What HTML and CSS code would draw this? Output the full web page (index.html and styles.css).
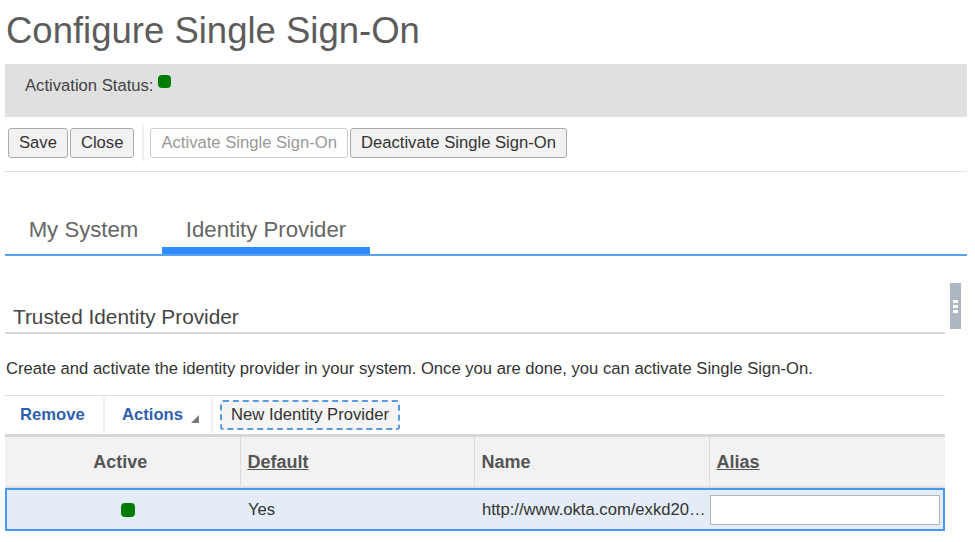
FILE: index.html
```html
<!DOCTYPE html>
<html lang="en">

<head>
    <meta charset="UTF-8">
    <title>Configure Single Sign-On</title>
    <link rel="stylesheet" href="styles.css">
</head>

<body>
    <h1 class="page-title">Configure Single Sign-On</h1>

    <div class="status-bar">
        <span>Activation Status:</span>
        <span class="status-dot status-dot-raised"></span>
    </div>

    <div class="page-toolbar">
        <button class="btn">Save</button>
        <button class="btn">Close</button>
        <span class="toolbar-sep"></span>
        <button class="btn btn-disabled">Activate Single Sign-On</button>
        <button class="btn">Deactivate Single Sign-On</button>
    </div>

    <div class="tabs">
        <div class="tab">My System</div>
        <div class="tab tab-active">Identity Provider</div>
    </div>

    <div class="content">
        <h2 class="section-title">Trusted Identity Provider</h2>
        <p class="section-text">Create and activate the identity provider in your system. Once you are done, you can activate Single Sign-On.</p>

        <div class="table-toolbar">
            <a class="tool-link tool-remove">Remove</a>
            <a class="tool-link tool-actions">Actions <span class="corner"></span></a>
            <button class="btn btn-focus">New Identity Provider</button>
        </div>

        <table class="idp-table">
            <colgroup>
                <col class="col-active">
                <col class="col-default">
                <col class="col-name">
                <col>
            </colgroup>
            <thead>
                <tr>
                    <th class="center">Active</th>
                    <th><u>Default</u></th>
                    <th>Name</th>
                    <th><u>Alias</u></th>
                </tr>
            </thead>
            <tbody>
                <tr>
                    <td class="center"><span class="status-dot status-dot-low"></span></td>
                    <td>Yes</td>
                    <td class="cut">http://www.okta.com/exkd20…</td>
                    <td class="input-cell"><input type="text" class="alias-input"></td>
                </tr>
            </tbody>
        </table>
    </div>

    <div class="grip"><i></i><i></i><i></i></div>
</body>

</html>
```

FILE: styles.css
```css
body {
    font-family: "Liberation Sans", Arial, sans-serif;
    margin: 0;
    padding: 0 8px 0 5px;
    background: #fff;
    color: #333;
    font-size: 16.64px;
}

.page-title {
    margin: 0 0 0 1px;
    padding-top: 10px;
    height: 64px;
    box-sizing: border-box;
    font-size: 36.5px;
    line-height: 42px;
    font-weight: normal;
    color: #5c5c5c;
}

.status-bar {
    height: 53px;
    box-sizing: border-box;
    padding: 11px 0 0 20px;
    background: #e0e0e0;
    line-height: 20px;
    color: #444;
}

.status-dot {
    display: inline-block;
    width: 14px;
    height: 14px;
    border-radius: 4px;
    background: #007d00;
}

.status-dot-raised {
    width: 13px;
    height: 13px;
    vertical-align: 3px;
}

.status-dot-low {
    vertical-align: -2px;
}

.page-toolbar {
    display: flex;
    align-items: center;
    gap: 2px;
    height: 55px;
    box-sizing: border-box;
    padding: 6px 0 8px 3px;
    border-bottom: 1px solid #e0e0e0;
}

.btn {
    height: 30px;
    padding: 0 10px;
    font-family: inherit;
    font-size: 16.64px;
    color: #333;
    background: #f2f2f2;
    border: 1px solid #ababab;
    border-radius: 3px;
}

.btn-disabled {
    background: #fff;
    color: #999;
    border-color: #ccc;
}

.toolbar-sep {
    width: 2px;
    height: 36px;
    margin: 0 4px 0 6px;
    background: #efefef;
}

.tabs {
    display: flex;
    height: 84px;
    box-sizing: border-box;
    align-items: flex-end;
    border-bottom: 2px solid #5aa0f0;
}

.tab {
    width: 157px;
    height: 44px;
    box-sizing: border-box;
    padding-top: 7px;
    font-size: 22.2px;
    line-height: 26px;
    text-align: center;
    color: #666;
}

.tab-active {
    width: 208px;
    border-bottom: 7px solid #2f8cff;
}

.content {
    width: 940px;
}

.section-title {
    margin: 0;
    height: 78px;
    box-sizing: border-box;
    padding: 49px 0 0 8px;
    font-size: 20.8px;
    line-height: 24px;
    font-weight: normal;
    color: #444;
    border-bottom: 2px solid #d8d8d8;
}

.section-text {
    margin: 0;
    height: 62px;
    box-sizing: border-box;
    padding: 25px 0 0 1px;
    line-height: 20px;
    color: #333;
    border-bottom: 1px solid #e0e0e0;
}

.table-toolbar {
    display: flex;
    align-items: center;
    height: 38px;
}

.tool-link {
    height: 36px;
    box-sizing: border-box;
    font-weight: bold;
    line-height: 36px;
    color: #2f5faf;
    border-right: 2px solid #f0f0f0;
}

.tool-remove {
    width: 100px;
    padding-left: 15px;
}

.tool-actions {
    position: relative;
    width: 108px;
    padding-left: 17px;
    margin-right: 7px;
}

.corner {
    position: absolute;
    right: 12px;
    bottom: 10px;
    width: 0;
    height: 0;
    border-style: solid;
    border-width: 0 0 8px 8px;
    border-color: transparent transparent #777 transparent;
}

.btn-focus {
    border: 2px dashed #5a9be0;
    padding: 0 9px;
    background: #f4f4f4;
}

.idp-table {
    width: 100%;
    table-layout: fixed;
    border-collapse: collapse;
}

.col-active {
    width: 235px;
}

.col-default {
    width: 234px;
}

.col-name {
    width: 235px;
}

.idp-table th {
    height: 47px;
    padding: 2px 0 0 7px;
    text-align: left;
    background: #f2f2f2;
    color: #555;
    font-size: 18px;
    border-top: 3px solid #d6d6d6;
    border-bottom: 3px solid #e0e0e0;
    border-left: 1px solid #dcdcdc;
}

.idp-table th:first-child {
    border-left: 0;
}

.idp-table th.center {
    text-align: center;
    padding: 2px 4px 0 0;
}

.idp-table tbody tr {
    outline: 2px solid #4a98f5;
    outline-offset: -2px;
}

.idp-table td {
    height: 43px;
    box-sizing: border-box;
    padding: 0 0 0 8px;
    background: #e4ecf7;
    color: #333;
}

.idp-table td.center {
    text-align: center;
    padding-left: 11px;
}

.cut {
    white-space: nowrap;
}

.idp-table td.input-cell {
    padding: 0 5px 0 1px;
}

.alias-input {
    display: block;
    width: 100%;
    height: 30px;
    box-sizing: border-box;
    border: 1px solid #b5b5b5;
    background: #fff;
}

.grip {
    position: absolute;
    left: 950px;
    top: 283px;
    display: flex;
    flex-direction: column;
    align-items: center;
    justify-content: center;
    gap: 2px;
    width: 11px;
    height: 46px;
    background: #adb7c2;
}

.grip i {
    width: 5px;
    height: 3px;
    background: #fff;
}
```
